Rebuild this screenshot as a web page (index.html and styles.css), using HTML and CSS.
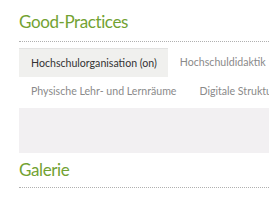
FILE: index.html
```html
<!DOCTYPE html>
<html lang="de">
<head>
    <title>Good-Practices</title>
    <link rel="stylesheet" href="styles.css">
</head>
<body>
    <div class="page-container">
        <h2 class="section-title">Good-Practices</h2>
        <ul class="tabs">
            <li class="tab active">Hochschulorganisation (on)</li>
            <li class="tab">Hochschuldidaktik</li>
            <li class="tab">Physische Lehr- und Lernräume</li>
            <li class="tab">Digitale Strukturen</li>
        </ul>
        <div class="tab-panel"></div>
        <h2 class="section-title gallery-title">Galerie</h2>
    </div>
</body>
</html>
```
FILE: styles.css
```css
body {
    font-family: Lato, 'Open Sans', Arial, sans-serif;
    margin: 0;
    padding: 0;
    background-color: white;
}
.page-container {
    padding: 8px 0 0 19px;
    overflow: hidden;
}
/* Green headings with dotted rule */
.section-title {
    color: #72a232;
    font-weight: normal;
    font-size: 17px;
    letter-spacing: -0.4px;
    line-height: 28px;
    margin: 0;
    padding-bottom: 5px;
    border-bottom: 1px dotted #b0b0b0;
    white-space: nowrap;
}
.gallery-title {
    padding-bottom: 3px;
}
.tabs {
    list-style: none;
    margin: 6px 0 0 0;
    padding: 0;
    display: flex;
    flex-wrap: wrap;
    width: 300px;
}
.tab {
    font-size: 10.6px;
    color: #8a8a8a;
    padding: 0 11px 0 12px;
    height: 29px;
    line-height: 29px;
    white-space: nowrap;
}
.tab.active {
    background-color: #f0f0ee;
    color: #333;
    border-top: 1px solid #e2e2e2;
    height: 28px;
    line-height: 28px;
}
.tab-panel {
    background-color: #f2f0f2;
    height: 45px;
    margin-top: 2px;
    margin-bottom: 3px;
}
```
